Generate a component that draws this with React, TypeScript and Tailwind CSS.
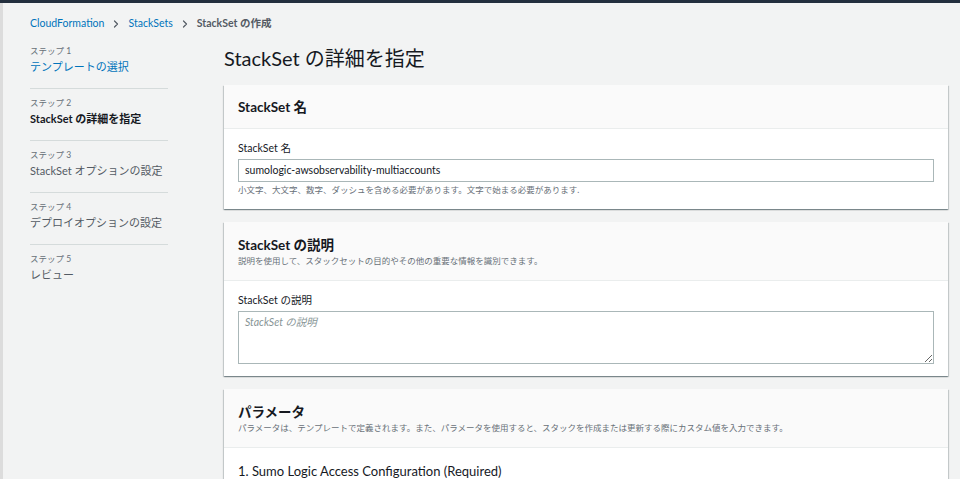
import { ChevronRight } from "lucide-react";

const font = { fontFamily: 'Lato, "Noto Sans CJK JP", sans-serif' };

const steps = [
  { label: "ステップ 1", title: "テンプレートの選択", state: "link" },
  { label: "ステップ 2", title: "StackSet の詳細を指定", state: "active" },
  { label: "ステップ 3", title: "StackSet オプションの設定", state: "idle" },
  { label: "ステップ 4", title: "デプロイオプションの設定", state: "idle" },
  { label: "ステップ 5", title: "レビュー", state: "idle" },
];

function Card({
  title,
  desc,
  children,
}: {
  title: string;
  desc?: string;
  children: React.ReactNode;
}) {
  return (
    <section className="bg-white shadow-[0_1px_1px_0_rgba(0,28,36,0.3),1px_1px_1px_0_rgba(0,28,36,0.15),-1px_1px_1px_0_rgba(0,28,36,0.15)]">
      <div
        className={`flex flex-col justify-center border-b border-[#eaeded] bg-[#fafafa] px-[14px] ${
          desc ? "h-[59px] pt-[1px]" : "h-[44px]"
        }`}
      >
        <h2 className="text-[13.5px] font-bold leading-[18px] text-[#16191f]">{title}</h2>
        {desc && <p className="mt-[1px] text-[8.5px] leading-[12px] text-[#687078]">{desc}</p>}
      </div>
      <div className="px-[14px]">{children}</div>
    </section>
  );
}

export default function App() {
  return (
    <div className="min-h-[479px] overflow-hidden bg-[#f2f3f3] text-[#16191f]" style={font}>
      <div className="h-[3px] bg-[#232f3e]" />
      <div className="flex h-[476px] border-l-[3px] border-[#dcdcdc]">
        <div className="flex-1 pl-[27px] pr-[12px]">
          <nav className="flex h-[40px] items-center gap-[6px] pt-[1px] text-[10.5px]">
            <span className="text-[#0073bb]">CloudFormation</span>
            <ChevronRight size={12} strokeWidth={2.4} className="text-[#545b64]" />
            <span className="text-[#0073bb]">StackSets</span>
            <ChevronRight size={12} strokeWidth={2.4} className="text-[#545b64]" />
            <span className="font-bold text-[#545b64]">StackSet の作成</span>
          </nav>
          <div className="flex gap-[56px]">
            <ul className="w-[138px] shrink-0">
              {steps.map((s, i) => (
                <li
                  key={s.label}
                  className={`${i < steps.length - 1 ? "border-b border-[#d5dbdb]" : ""} ${
                    i === 0 ? "h-[46px] pt-[2px]" : "h-[52px] pt-[8px]"
                  }`}
                >
                  <div className="text-[8.5px] leading-[12px] text-[#687078]">{s.label}</div>
                  <div
                    className={`mt-[2px] text-[11px] leading-[16px] ${
                      s.state === "link"
                        ? "text-[#0073bb]"
                        : s.state === "active"
                          ? "font-bold text-[#16191f]"
                          : "text-[#545b64]"
                    }`}
                  >
                    {s.title}
                  </div>
                </li>
              ))}
            </ul>
            <main className="flex-1">
              <h1 className="mb-[12px] text-[20px] leading-[30px] text-[#16191f]">StackSet の詳細を指定</h1>
              <div className="flex flex-col gap-[13px]">
                <Card title="StackSet 名">
                  <div className="pb-[13px] pt-[12px]">
                    <label className="block text-[10.5px] leading-[14px] text-[#16191f]">StackSet 名</label>
                    <div className="mt-[4px] flex h-[23px] items-center border border-[#aab7b8] px-[6px] text-[10.5px]">
                      sumologic-awsobservability-multiaccounts
                    </div>
                    <p className="mt-[2px] text-[8.5px] leading-[12px] text-[#687078]">
                      小文字、大文字、数字、ダッシュを含める必要があります。文字で始まる必要があります.
                    </p>
                  </div>
                </Card>
                <Card
                  title="StackSet の説明"
                  desc="説明を使用して、スタックセットの目的やその他の重要な情報を識別できます。"
                >
                  <div className="pb-[12px] pt-[12px]">
                    <label className="block text-[10.5px] leading-[14px] text-[#16191f]">StackSet の説明</label>
                    <textarea
                      placeholder="StackSet の説明"
                      className="mt-[4px] block h-[53px] w-full resize-y border border-[#aab7b8] px-[6px] py-[3px] text-[10.5px] italic placeholder:text-[#879596] focus:outline-none"
                      style={font}
                    />
                  </div>
                </Card>
                <Card
                  title="パラメータ"
                  desc="パラメータは、テンプレートで定義されます。また、パラメータを使用すると、スタックを作成または更新する際にカスタム値を入力できます。"
                >
                  <div className="pt-[14px] text-[13px] leading-[18px] text-[#16191f]">
                    1. Sumo Logic Access Configuration (Required)
                  </div>
                  <div className="h-[40px]" />
                </Card>
              </div>
            </main>
          </div>
        </div>
      </div>
    </div>
  );
}
